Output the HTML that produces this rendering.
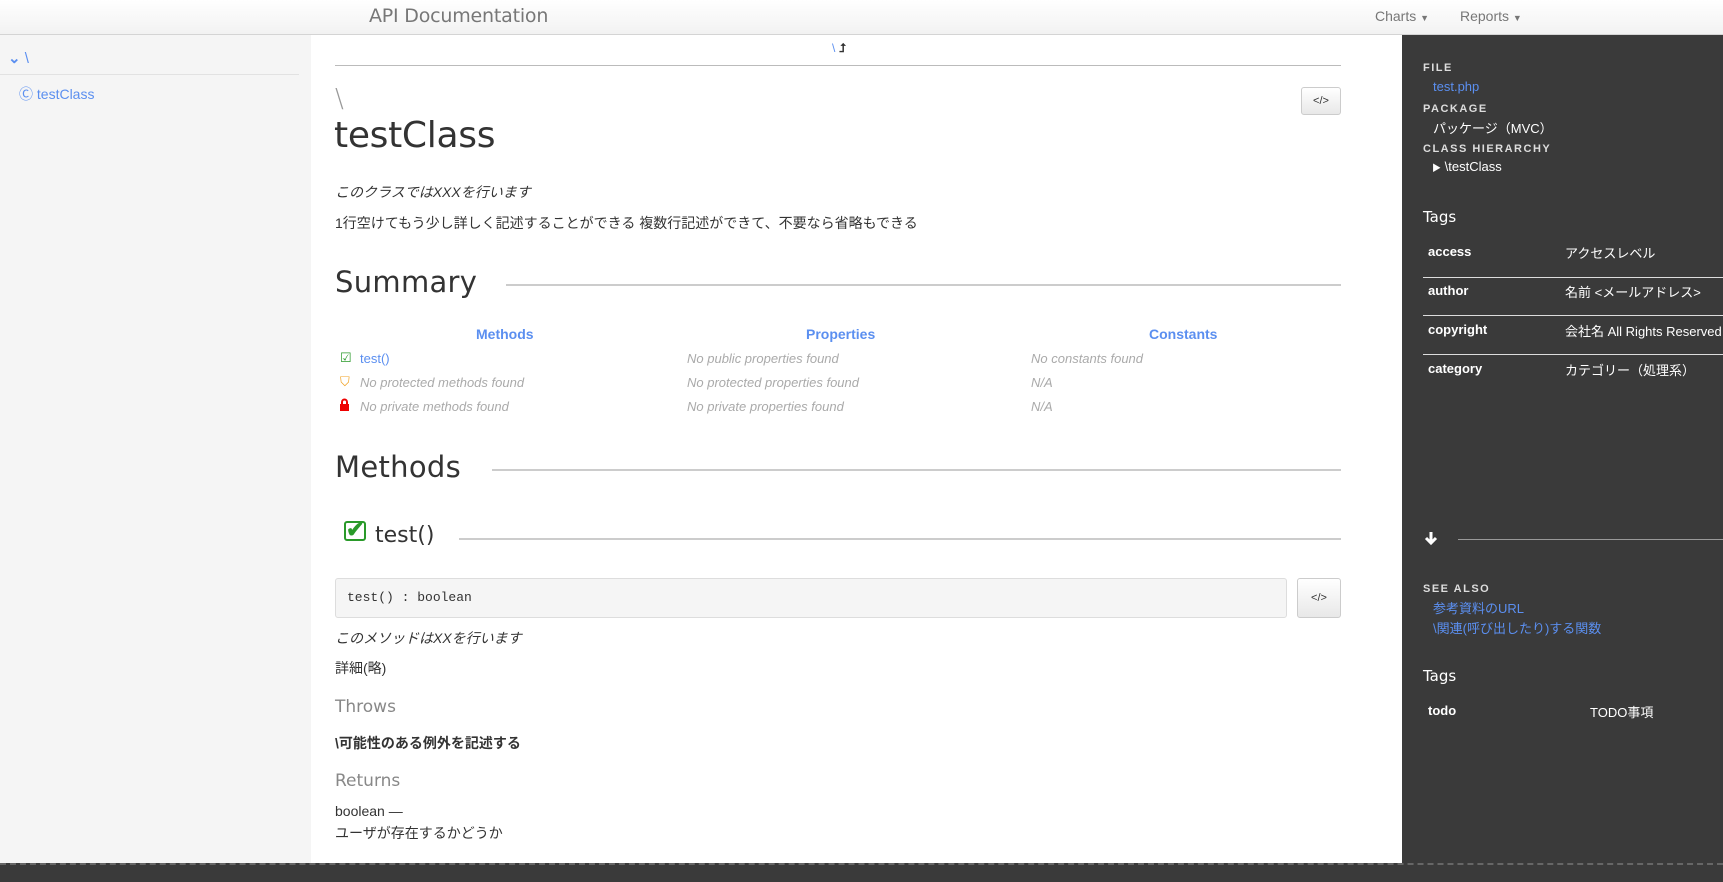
<!DOCTYPE html>
<html><head><meta charset="utf-8"><style>
*{margin:0;padding:0;box-sizing:border-box}
body{width:1723px;height:882px;overflow:hidden;position:relative;font-family:"Liberation Sans","Noto Sans CJK JP",sans-serif;color:#333;background:#fff}
.a{position:absolute;white-space:nowrap}
.nav{left:0;top:0;width:1723px;height:35px;background:linear-gradient(#fff,#f2f2f2);border-bottom:1px solid #d4d4d4}
.side{left:0;top:35px;width:311px;height:828px;background:#f5f5f5}
.right{left:1402px;top:35px;width:321px;height:828px;background:#3a3a3a;color:#fff}
.foot{left:0;top:863px;width:1723px;height:19px;background:#3a3a3a;border-top:2px dashed #666}
.lnk{color:#5b8ff0}
.hd{font-family:"DejaVu Sans","Noto Sans CJK JP",sans-serif;color:#333}
.gr{color:#aaa;font-style:italic;font-size:13px}
.hl{height:2px;background:#ccc}
.btn{border:1px solid #ccc;border-radius:3px;background:linear-gradient(#fff,#e8e8e8);font-size:11px;text-align:center;color:#333}
.lab{font-size:11px;font-weight:bold;letter-spacing:1.5px;color:#ddd}
.tl{height:1px;background:#ddd}
</style></head><body>
<div class="a nav"></div>
<div class="a hd" style="left:369px;top:5px;font-size:19px;color:#777;letter-spacing:-0.2px">API Documentation</div>
<div class="a" style="left:1375px;top:8px;font-size:14px;color:#777">Charts <span style="font-size:9px">▼</span></div>
<div class="a" style="left:1460px;top:8px;font-size:14px;color:#777">Reports <span style="font-size:9px">▼</span></div>

<div class="a side"></div>
<div class="a lnk" style="left:8px;top:49px;font-size:15px;font-weight:bold">⌄ <span style="font-weight:normal">\</span></div>
<div class="a" style="left:0;top:74px;width:299px;height:1px;background:#e2e2e2"></div>
<div class="a lnk" style="left:19px;top:84px;font-size:14px">Ⓒ testClass</div>

<div class="a" style="left:832px;top:41px;font-size:12px"><span class="lnk">\</span> <b>⮥</b></div>
<div class="a" style="left:335px;top:65px;width:1006px;height:1px;background:#bbb"></div>
<div class="a btn" style="left:1301px;top:87px;width:40px;height:28px;line-height:26px">&lt;/&gt;</div>
<div class="a hd" style="left:335px;top:84px;font-size:26px;color:#999;font-weight:200">\</div>
<div class="a hd" style="left:334px;top:115px;font-size:36px;letter-spacing:-0.3px">testClass</div>
<div class="a" style="left:335px;top:182px;font-size:14px;font-style:italic">このクラスではXXXを行います</div>
<div class="a" style="left:335px;top:213px;font-size:14px">1行空けてもう少し詳しく記述することができる 複数行記述ができて、不要なら省略もできる</div>

<div class="a hd" style="left:335px;top:265px;font-size:29px;letter-spacing:0.3px">Summary</div>
<div class="a hl" style="left:506px;top:284px;width:835px"></div>
<div class="a lnk" style="left:476px;top:326px;font-size:14px;font-weight:bold">Methods</div>
<div class="a lnk" style="left:806px;top:326px;font-size:14px;font-weight:bold">Properties</div>
<div class="a lnk" style="left:1149px;top:326px;font-size:14px;font-weight:bold">Constants</div>
<div class="a" style="left:340px;top:350px;font-size:13px;color:#2a9a2a">☑</div>
<div class="a lnk" style="left:360px;top:351px;font-size:13px">test()</div>
<div class="a" style="left:340px;top:374px;font-size:13px;color:#f0a020">⛉</div>
<div class="a gr" style="left:360px;top:375px">No protected methods found</div>
<svg class="a" style="left:339px;top:398px" width="11" height="13" viewBox="0 0 11 13"><path d="M3 6V4a2.5 2.5 0 0 1 5 0v2" fill="none" stroke="#e00" stroke-width="2"/><rect x="1" y="6" width="9" height="7" fill="#e00"/></svg>
<div class="a gr" style="left:360px;top:399px">No private methods found</div>
<div class="a gr" style="left:687px;top:351px">No public properties found</div>
<div class="a gr" style="left:687px;top:375px">No protected properties found</div>
<div class="a gr" style="left:687px;top:399px">No private properties found</div>
<div class="a gr" style="left:1031px;top:351px">No constants found</div>
<div class="a gr" style="left:1031px;top:375px">N/A</div>
<div class="a gr" style="left:1031px;top:399px">N/A</div>

<div class="a hd" style="left:335px;top:450px;font-size:29px;letter-spacing:0.3px">Methods</div>
<div class="a hl" style="left:492px;top:469px;width:849px"></div>
<div class="a" style="left:344px;top:521px;width:22px;height:20px;border:2px solid #2a9a2a;border-radius:3px;color:#2a9a2a;font-size:22px;line-height:14px;font-weight:bold;text-align:center">✔</div>
<div class="a hd" style="left:375px;top:523px;font-size:22px">test()</div>
<div class="a hl" style="left:459px;top:538px;width:882px"></div>
<div class="a" style="left:335px;top:578px;width:952px;height:40px;background:#f5f5f5;border:1px solid #ddd;border-radius:3px;font-family:'Liberation Mono',monospace;font-size:13px;line-height:38px;padding-left:11px">test() : boolean</div>
<div class="a btn" style="left:1297px;top:578px;width:44px;height:40px;line-height:38px">&lt;/&gt;</div>
<div class="a" style="left:335px;top:628px;font-size:14px;font-style:italic">このメソッドはXXを行います</div>
<div class="a" style="left:335px;top:658px;font-size:14px">詳細(略)</div>
<div class="a hd" style="left:335px;top:697px;font-size:17px;color:#888">Throws</div>
<div class="a" style="left:335px;top:733px;font-size:14px;font-weight:bold">\可能性のある例外を記述する</div>
<div class="a hd" style="left:335px;top:771px;font-size:17px;color:#888">Returns</div>
<div class="a" style="left:335px;top:803px;font-size:14px">boolean —</div>
<div class="a" style="left:335px;top:823px;font-size:14px">ユーザが存在するかどうか</div>

<div class="a right"></div>
<div class="a lab" style="left:1423px;top:62px">FILE</div>
<div class="a lnk" style="left:1433px;top:79px;font-size:13px">test.php</div>
<div class="a lab" style="left:1423px;top:103px">PACKAGE</div>
<div class="a" style="left:1433px;top:118px;font-size:13px;color:#fff">パッケージ（MVC）</div>
<div class="a lab" style="left:1423px;top:143px">CLASS HIERARCHY</div>
<div class="a" style="left:1432px;top:159px;font-size:13px;color:#fff"><span style="font-size:9px">▶</span> \testClass</div>
<div class="a hd" style="left:1423px;top:208px;font-size:15px;color:#fff">Tags</div>
<div class="a" style="left:1428px;top:244px;font-size:13px;font-weight:bold;color:#fff">access</div>
<div class="a" style="left:1565px;top:243px;font-size:13px;color:#fff">アクセスレベル</div>
<div class="a tl" style="left:1423px;top:277px;width:300px"></div>
<div class="a" style="left:1428px;top:283px;font-size:13px;font-weight:bold;color:#fff">author</div>
<div class="a" style="left:1565px;top:282px;font-size:13px;color:#fff">名前 &lt;メールアドレス&gt;</div>
<div class="a tl" style="left:1423px;top:315px;width:300px"></div>
<div class="a" style="left:1428px;top:322px;font-size:13px;font-weight:bold;color:#fff">copyright</div>
<div class="a" style="left:1565px;top:321px;font-size:13px;color:#fff">会社名 All Rights Reserved</div>
<div class="a tl" style="left:1423px;top:354px;width:300px"></div>
<div class="a" style="left:1428px;top:361px;font-size:13px;font-weight:bold;color:#fff">category</div>
<div class="a" style="left:1565px;top:360px;font-size:13px;color:#fff">カテゴリー（処理系）</div>
<svg class="a" style="left:1423px;top:530px" width="16" height="16" viewBox="0 0 16 16"><path d="M8 2v11M3 8l5 5 5-5" fill="none" stroke="#fff" stroke-width="3"/></svg>
<div class="a" style="left:1458px;top:539px;width:265px;height:1px;background:#999"></div>
<div class="a lab" style="left:1423px;top:583px">SEE ALSO</div>
<div class="a lnk" style="left:1433px;top:598px;font-size:13px">参考資料のURL</div>
<div class="a lnk" style="left:1433px;top:618px;font-size:13px">\関連(呼び出したり)する関数</div>
<div class="a hd" style="left:1423px;top:667px;font-size:15px;color:#fff">Tags</div>
<div class="a" style="left:1428px;top:703px;font-size:13px;font-weight:bold;color:#fff">todo</div>
<div class="a" style="left:1590px;top:702px;font-size:13px;color:#fff">TODO事項</div>

<div class="a foot"></div>
</body></html>
